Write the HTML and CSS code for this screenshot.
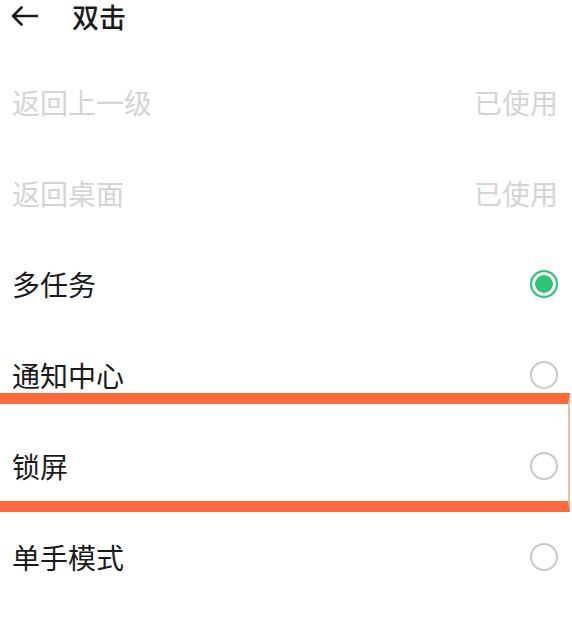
FILE: index.html
```html
<!DOCTYPE html>
<html lang="zh-CN">
<head>
    <meta charset="UTF-8">
    <meta name="viewport" content="width=device-width, initial-scale=1.0">
    <title>双击</title>
    <link rel="stylesheet" href="styles.css">
</head>
<body>
    <div class="page">
        <div class="header">
            <svg class="back" width="28" height="20" viewBox="0 0 28 20">
                <path d="M26 10 H2 M10.5 1.5 L2 10 L10.5 18.5" fill="none" stroke="#1a1a1a" stroke-width="2.6" stroke-linecap="round" stroke-linejoin="round"/>
            </svg>
            <span class="title">双击</span>
        </div>

        <div class="list">
            <div class="row disabled">
                <span class="label">返回上一级</span>
                <span class="status">已使用</span>
            </div>
            <div class="row disabled">
                <span class="label">返回桌面</span>
                <span class="status">已使用</span>
            </div>
            <div class="row">
                <span class="label">多任务</span>
                <span class="radio checked"></span>
            </div>
            <div class="row">
                <span class="label">通知中心</span>
                <span class="radio"></span>
            </div>
            <div class="row">
                <span class="label">锁屏</span>
                <span class="radio"></span>
            </div>
            <div class="row">
                <span class="label">单手模式</span>
                <span class="radio"></span>
            </div>
        </div>

        <!-- highlight box drawn over the 锁屏 row -->
        <div class="highlight"></div>
    </div>
</body>
</html>
```

FILE: styles.css
```css
:root {
    --text-color: #1a1a1a;
    --muted-color: #d4d4d4;
    --green: #2fc574;
    --ring-color: #c9c9c9;
    --orange: #fc6b3d;
}

body {
    margin: 0;
    background-color: white;
    font-family: "Noto Sans CJK SC", "Noto Sans", sans-serif;
    color: var(--text-color);
}

.page {
    position: relative;
    width: 572px;
    height: 619px;
    overflow: hidden;
}

.header {
    display: flex;
    align-items: center;
    height: 32px;
    padding-left: 11px;
}

.back {
    display: block;
}

.title {
    margin-left: 33px;
    font-size: 27px;
    font-weight: 500;
    line-height: 1;
}

.list {
    padding-top: 24px;
}

.row {
    display: flex;
    align-items: center;
    justify-content: space-between;
    height: 91px;
    padding: 0 12px 0 12px;
}

.label {
    font-size: 28px;
    line-height: 1;
}

.disabled .label,
.status {
    color: var(--muted-color);
}

.status {
    font-size: 28px;
    line-height: 1;
    margin-right: 2px;
}

.radio {
    box-sizing: border-box;
    width: 28px;
    height: 28px;
    border-radius: 50%;
    border: 2px solid var(--ring-color);
    margin-right: 2px;
}

.radio.checked {
    border: 2.5px solid var(--green);
    background-color: var(--green);
    box-shadow: inset 0 0 0 3px white;
}

.highlight {
    position: absolute;
    top: 393px;
    left: 0;
    width: 568px;
    height: 97px;
    border-top: 11px solid var(--orange);
    border-bottom: 11px solid var(--orange);
    border-right: 2px solid #f9b9a0;
}
```
